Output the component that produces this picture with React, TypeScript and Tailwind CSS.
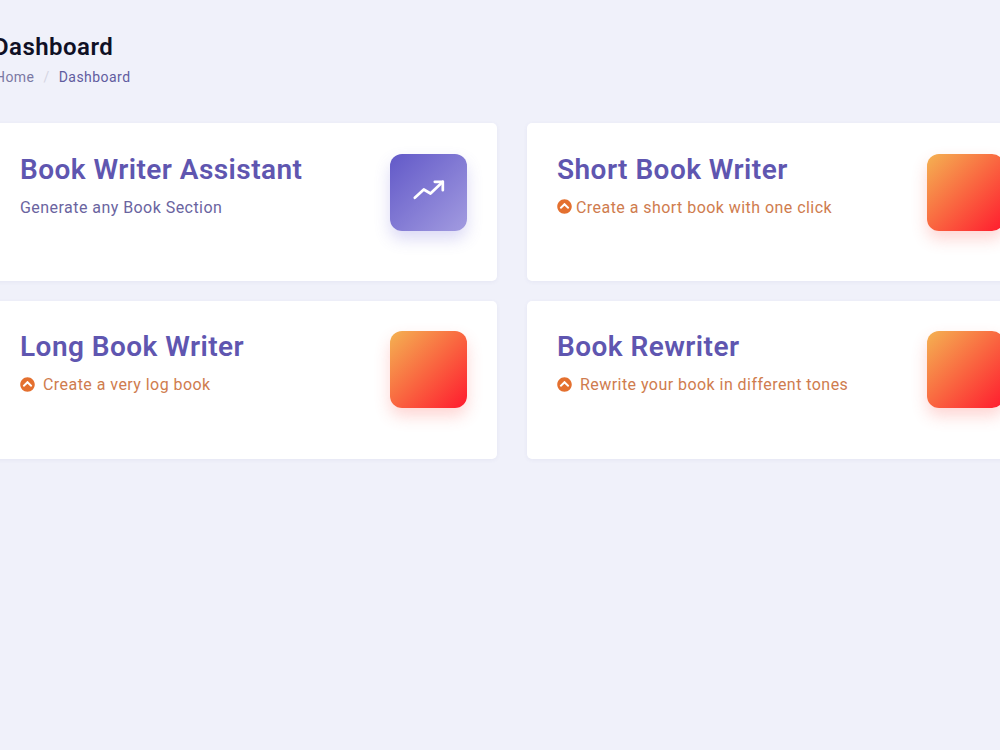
import { FaChevronCircleUp } from 'react-icons/fa';

interface WriterCard {
  title: string;
  subtitle: string;
  subtitleGap?: string;
  accent?: boolean;
}

const cards: WriterCard[] = [
  { title: 'Book Writer Assistant', subtitle: 'Generate any Book Section', accent: true },
  { title: 'Short Book Writer', subtitle: 'Create a short book with one click', subtitleGap: 'gap-[4px]' },
  { title: 'Long Book Writer', subtitle: 'Create a very log book', subtitleGap: 'gap-[8px]' },
  { title: 'Book Rewriter', subtitle: 'Rewrite your book in different tones', subtitleGap: 'gap-[8px]' },
];

function TrendIcon() {
  return (
    <svg width="36" height="36" viewBox="0 0 36 36" fill="none" stroke="white" strokeWidth="2.7" strokeLinecap="round" strokeLinejoin="round">
      <path d="M3.8 23.8 12.8 15.5 19.5 19.5 31.8 7.8" />
      <path d="M23.8 7.8H31.8V16.2" />
    </svg>
  );
}

function Card({ card }: { card: WriterCard }) {
  return (
    <div className="flex h-[158px] justify-between rounded-[5px] bg-white px-[30px] pt-[30.6px] shadow-[0_1px_4px_rgba(90,90,160,0.07)]">
      <div className="pt-px">
        <h2 className="text-[28px] font-semibold leading-[30px] tracking-[0.45px] text-[#5f56b0]">{card.title}</h2>
        {card.accent ? (
          <p className="mt-[11px] text-base leading-[24px] tracking-[0.45px] text-[#6a649f]">{card.subtitle}</p>
        ) : (
          <p className={`mt-[11px] flex items-center text-base leading-[24px] tracking-[0.45px] text-[#cf7c4e] ${card.subtitleGap}`}>
            <FaChevronCircleUp size={15} className="-translate-y-px text-[#e4702f]" />
            {card.subtitle}
          </p>
        )}
      </div>
      {card.accent ? (
        <div className="flex h-[77px] w-[77px] shrink-0 items-center justify-center rounded-[12px] bg-[linear-gradient(135deg,#6259c8,#a29be0)] shadow-[0_8px_16px_rgba(105,95,215,0.24)]">
          <TrendIcon />
        </div>
      ) : (
        <div className="h-[77px] w-[77px] shrink-0 rounded-[12px] bg-[linear-gradient(135deg,#f4b252,#ff1a2e)] shadow-[0_8px_16px_rgba(250,80,70,0.24)]" />
      )}
    </div>
  );
}

export default function App() {
  return (
    <div className="h-[750px] w-[1000px] overflow-hidden bg-[#f0f1fa] font-['Roboto',sans-serif]">
      <div className="-ml-[10px] w-[1044px] pt-[31px]">
        <div className="ml-[3px]">
          <h1 className="text-[24px] font-semibold leading-[32px] tracking-[0.45px] text-[#0f1025]">Dashboard</h1>
          <div className="ml-[2px] mt-[4px] flex items-center text-sm leading-[20px] tracking-[0.45px]">
            <span className="text-[#7b78a3]">Home</span>
            <span className="mx-[9px] text-[#d5d5e2]">/</span>
            <span className="text-[#615c9f]">Dashboard</span>
          </div>
        </div>
        <div className="mt-[36.2px] grid grid-cols-2 gap-x-[30px] gap-y-[19.4px]">
          {cards.map((card) => (
            <Card key={card.title} card={card} />
          ))}
        </div>
      </div>
    </div>
  );
}
